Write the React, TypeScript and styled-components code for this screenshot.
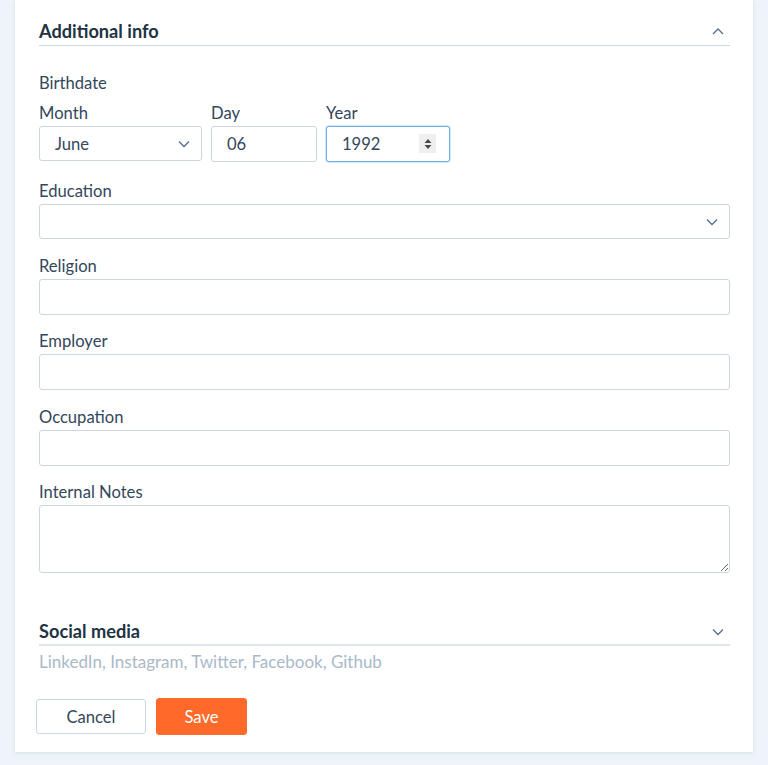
import React from "react";
import styled, { createGlobalStyle } from "styled-components";

const GlobalStyle = createGlobalStyle`
  body {
    margin: 0;
    background: #eef4f9;
    font-family: Lato, "Open Sans", sans-serif;
    color: #33475b;
  }
  * { box-sizing: border-box; }
`;

const Chevron = ({ up }: { up?: boolean }) => (
  <svg width="12" height="8" viewBox="0 0 12 8" fill="none">
    <path
      d={up ? "M1 7L6 2L11 7" : "M1 1.5L6 6.5L11 1.5"}
      stroke="#516f90"
      strokeWidth="1.3"
    />
  </svg>
);

const App = () => (
  <>
    <GlobalStyle />
    <Page>
      <Card>
        <SectionHeader>
          <SectionTitle>Additional info</SectionTitle>
          <Chevron up />
        </SectionHeader>

        <GroupLabel>Birthdate</GroupLabel>
        <BirthRow>
          <Field width={163}>
            <Label>Month</Label>
            <SelectBox>
              June
              <Chevron />
            </SelectBox>
          </Field>
          <Field width={106}>
            <Label>Day</Label>
            <Input defaultValue="06" />
          </Field>
          <Field width={124}>
            <Label>Year</Label>
            <SpinWrap>
              <Input defaultValue="1992" focused />
              <Spinner>
                <svg width="8" height="12" viewBox="0 0 8 12">
                  <path d="M4 1L7.5 5H0.5Z" fill="#4a4a4a" />
                  <path d="M4 11L0.5 7H7.5Z" fill="#4a4a4a" />
                </svg>
              </Spinner>
            </SpinWrap>
          </Field>
        </BirthRow>

        <Stack>
          <Field>
            <Label>Education</Label>
            <SelectBox>
              <span />
              <Chevron />
            </SelectBox>
          </Field>
          <Field>
            <Label>Religion</Label>
            <Input />
          </Field>
          <Field>
            <Label>Employer</Label>
            <Input />
          </Field>
          <Field>
            <Label>Occupation</Label>
            <Input />
          </Field>
          <Field>
            <Label>Internal Notes</Label>
            <TextArea />
          </Field>
        </Stack>

        <SocialHeader>
          <SectionTitle>Social media</SectionTitle>
          <Chevron />
        </SocialHeader>
        <Hint>LinkedIn, Instagram, Twitter, Facebook, Github</Hint>

        <Actions>
          <Button>Cancel</Button>
          <Button primary>Save</Button>
        </Actions>
      </Card>
    </Page>
  </>
);

export default App;

const Page = styled.div`
  padding: 0 15px 14px;
`;

const Card = styled.div`
  width: 738px;
  background: #fff;
  padding: 19px 23px 17px 24px;
  box-shadow: 0 1px 4px rgba(190, 210, 230, 0.6);
`;

const SectionHeader = styled.div`
  display: flex;
  align-items: center;
  justify-content: space-between;
  height: 27px;
  padding: 0 6px 2px 0;
  border-bottom: 1px solid #cbd6e2;
`;

const SocialHeader = styled(SectionHeader)`
  margin-top: 46px;
  border-bottom-color: #dfe6ee;
  border-bottom-width: 2px;
  & svg {
    margin-top: 2px;
  }
`;

const SectionTitle = styled.h3`
  margin: 0;
  font-size: 18.2px;
  line-height: 22px;
  font-weight: 700;
  color: #213343;
`;

const GroupLabel = styled.div`
  margin-top: 27px;
  font-size: 16.6px;
  line-height: 20px;
`;

const BirthRow = styled.div`
  display: flex;
  gap: 9px;
  margin-top: 10px;
`;

const Stack = styled.div`
  display: flex;
  flex-direction: column;
  gap: 16.5px;
  margin-top: 19px;
`;

const Field = styled.div<{ width?: number }>`
  display: flex;
  flex-direction: column;
  gap: 3px;
  width: ${({ width }) => (width ? `${width}px` : "100%")};
`;

const Label = styled.label`
  font-size: 16.6px;
  line-height: 20px;
  color: #33475b;
`;

const Input = styled.input<{ focused?: boolean }>`
  width: 100%;
  height: 36px;
  padding: 0 15px;
  border: 1px solid ${({ focused }) => (focused ? "#6faee0" : "#cbd6e2")};
  border-radius: 3px;
  box-shadow: ${({ focused }) => (focused ? "0 0 0 1px #d3e8f8" : "none")};
  background: #fff;
  font-family: inherit;
  font-size: 16.6px;
  color: #33475b;
  outline: none;
`;

const SelectBox = styled.div`
  display: flex;
  align-items: center;
  justify-content: space-between;
  height: 35px;
  padding: 0 11px 0 15px;
  border: 1px solid #cbd6e2;
  border-radius: 3px;
  font-size: 16.6px;
  color: #33475b;
`;

const SpinWrap = styled.div`
  position: relative;
`;

const Spinner = styled.span`
  position: absolute;
  right: 14px;
  top: 8px;
  width: 17px;
  height: 19px;
  display: flex;
  align-items: center;
  justify-content: center;
  background: #efefef;
`;

const TextArea = styled.textarea`
  width: 100%;
  height: 68px;
  border: 1px solid #cbd6e2;
  border-radius: 3px;
  resize: vertical;
  font-family: inherit;
  font-size: 16px;
  padding: 8px 15px;
  outline: none;
`;

const Hint = styled.div`
  margin-top: 6px;
  font-size: 17px;
  line-height: 20px;
  color: #a9b9c9;
`;

const Actions = styled.div`
  display: flex;
  align-items: center;
  gap: 10px;
  margin: 26px 0 0 -3px;
`;

const Button = styled.button<{ primary?: boolean }>`
  height: ${({ primary }) => (primary ? "37px" : "35px")};
  width: ${({ primary }) => (primary ? "91px" : "110px")};
  padding: 0;
  border: 1px solid ${({ primary }) => (primary ? "#ff6a2a" : "#cbd6e2")};
  border-radius: 3px;
  background: ${({ primary }) => (primary ? "#ff6a2a" : "#fff")};
  color: ${({ primary }) => (primary ? "#fff" : "#33475b")};
  font-family: inherit;
  font-size: 16.6px;
  cursor: pointer;
`;
